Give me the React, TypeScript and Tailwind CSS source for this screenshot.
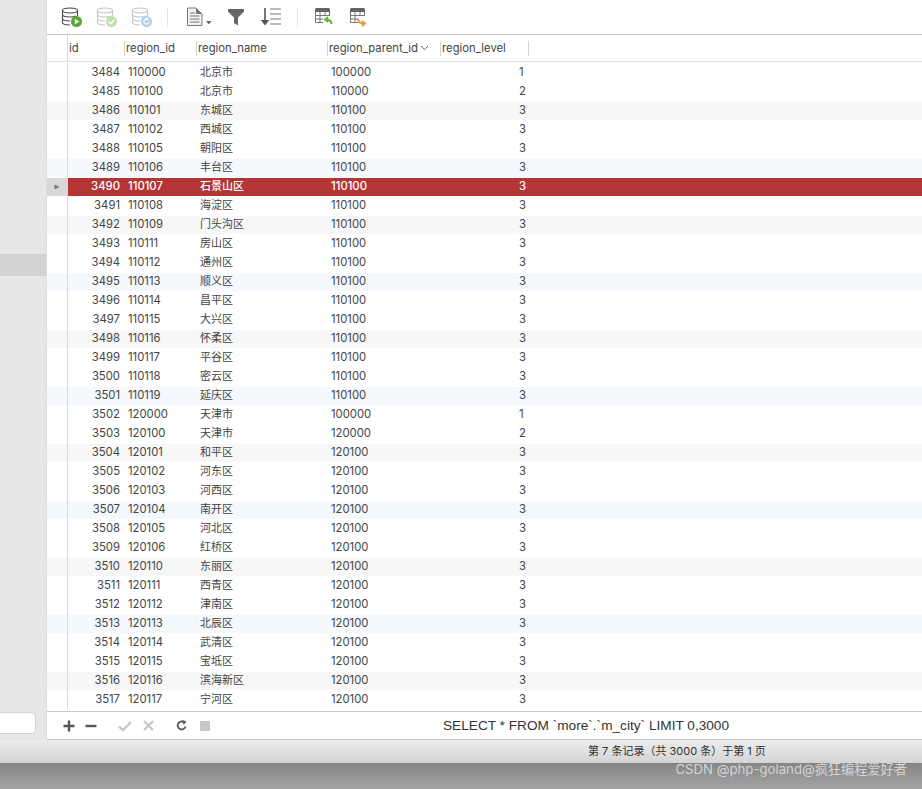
import { ReactNode } from 'react';

const FONT = 'font-["Inter","Noto_Sans_CJK_SC",sans-serif]';

// id, region_id, name, parent, level
const ROWS: [number, string, string, string, number][] = [
  [3484, '110000', '北京市', '100000', 1],
  [3485, '110100', '北京市', '110000', 2],
  [3486, '110101', '东城区', '110100', 3],
  [3487, '110102', '西城区', '110100', 3],
  [3488, '110105', '朝阳区', '110100', 3],
  [3489, '110106', '丰台区', '110100', 3],
  [3490, '110107', '石景山区', '110100', 3],
  [3491, '110108', '海淀区', '110100', 3],
  [3492, '110109', '门头沟区', '110100', 3],
  [3493, '110111', '房山区', '110100', 3],
  [3494, '110112', '通州区', '110100', 3],
  [3495, '110113', '顺义区', '110100', 3],
  [3496, '110114', '昌平区', '110100', 3],
  [3497, '110115', '大兴区', '110100', 3],
  [3498, '110116', '怀柔区', '110100', 3],
  [3499, '110117', '平谷区', '110100', 3],
  [3500, '110118', '密云区', '110100', 3],
  [3501, '110119', '延庆区', '110100', 3],
  [3502, '120000', '天津市', '100000', 1],
  [3503, '120100', '天津市', '120000', 2],
  [3504, '120101', '和平区', '120100', 3],
  [3505, '120102', '河东区', '120100', 3],
  [3506, '120103', '河西区', '120100', 3],
  [3507, '120104', '南开区', '120100', 3],
  [3508, '120105', '河北区', '120100', 3],
  [3509, '120106', '红桥区', '120100', 3],
  [3510, '120110', '东丽区', '120100', 3],
  [3511, '120111', '西青区', '120100', 3],
  [3512, '120112', '津南区', '120100', 3],
  [3513, '120113', '北辰区', '120100', 3],
  [3514, '120114', '武清区', '120100', 3],
  [3515, '120115', '宝坻区', '120100', 3],
  [3516, '120116', '滨海新区', '120100', 3],
  [3517, '120117', '宁河区', '120100', 3],
];

function DbIcon({ badge, faded, children }: { badge: string; faded?: boolean; children: ReactNode }) {
  const line = faded ? '#c4c4c4' : '#4a4a4a';
  return (
    <svg width="22" height="22" viewBox="0 0 22 22" fill="none">
      <ellipse cx="9" cy="4.5" rx="7.5" ry="2.5" stroke={line} strokeWidth="1.1" />
      <path d="M1.5 4.5V16.5C1.5 18 5 19 9 19M16.5 4.5V10M1.5 8.5C1.5 10 5 11 9 11C11.5 11 13.5 10.6 15 10M1.5 12.5C1.5 14 5 15 9 15" stroke={line} strokeWidth="1.1" />
      <circle cx="15.5" cy="15.5" r="5.5" fill={badge} />
      {children}
    </svg>
  );
}

function TableIcon({ arrow, back }: { arrow: string; back?: boolean }) {
  return (
    <svg width="20" height="20" viewBox="0 0 20 20" fill="none">
      <path d="M1 2.5C1 1.7 1.7 1 2.5 1H14.5C15.3 1 16 1.7 16 2.5V5H1Z" fill="#666" />
      <path d="M1.5 5V15.5H9M15.5 5V9M1.5 8.5H15.5M1.5 12H9M6 5V15.5M11 5V9" stroke="#777" strokeWidth="1" />
      {back ? (
        <path d="M17.5 17C17.5 14 15.5 12.5 11.5 12.5M14 10L11 12.5L14 15" stroke={arrow} strokeWidth="2" />
      ) : (
        <path d="M9 12C9 15 11 16.5 15.5 16.5M13 14L16 16.5L13 19" stroke={arrow} strokeWidth="2" />
      )}
    </svg>
  );
}

function TopBar() {
  return (
    <div className="flex h-[35px] items-center border-b border-[#c4c4c4] bg-white pl-[14px] pb-px">
      <DbIcon badge="#5aa532">
        <path d="M13.8 12.8L18.5 15.5L13.8 18.2Z" fill="#fff" />
      </DbIcon>
      <div className="ml-[13px]">
        <DbIcon badge="#bfe0ad" faded>
          <path d="M12.8 15.5L14.8 17.5L18.2 13.8" stroke="#fff" strokeWidth="1.6" />
        </DbIcon>
      </div>
      <div className="ml-[13px]">
        <DbIcon badge="#b4cde6" faded>
          <path d="M18 15.5A2.6 2.6 0 1 1 15.5 12.9M15 11.5L17 13L15 14.5" stroke="#fff" strokeWidth="1.2" />
        </DbIcon>
      </div>
      <div className="ml-[14px] mr-[18px] h-5 w-px bg-[#e4e4e4]" />
      <svg width="26" height="20" viewBox="0 0 26 20" fill="none">
        <path d="M1.5 1H10L16 7V18.5H1.5Z" fill="#f2f2f2" stroke="#777" strokeWidth="1" />
        <path d="M10 1V7H16Z" fill="#777" />
        <path d="M4 6H9M4 9H13.5M4 12H13.5M4 15H13.5" stroke="#777" strokeWidth="1" />
        <path d="M20 14H25.5L22.75 17.5Z" fill="#666" />
      </svg>
      <svg className="ml-[15px]" width="18" height="18" viewBox="0 0 18 18">
        <path d="M1 1H17V3.5L11 9.5V17.5L7 15V9.5L1 3.5Z" fill="#666" />
      </svg>
      <svg className="ml-[15px]" width="22" height="20" viewBox="0 0 22 20" fill="none">
        <path d="M5 1V15" stroke="#555" strokeWidth="1.6" />
        <path d="M0.8 13H9.2L5 18.5Z" fill="#555" />
        <path d="M10 2H21M10 7H21M10 12H21M10 17H21" stroke="#777" strokeWidth="1.1" />
      </svg>
      <div className="ml-[15px] mr-[16px] h-5 w-px bg-[#e4e4e4]" />
      <TableIcon arrow="#68b03c" back />
      <div className="ml-[15px]">
        <TableIcon arrow="#e89a3c" />
      </div>
    </div>
  );
}

function HeaderCell({ label, w, sort }: { label: string; w: string; sort?: boolean }) {
  return (
    <div className={`flex h-[15px] items-center gap-[2px] pl-px border-r border-[#d4d4d4] ${w}`}>
      <span>{label}</span>
      {sort && (
        <svg width="9" height="6" viewBox="0 0 9 6" fill="none">
          <path d="M1 1L4.5 4.5L8 1" stroke="#666" strokeWidth="1" />
        </svg>
      )}
    </div>
  );
}

function Row({ row, index }: { row: (typeof ROWS)[number]; index: number }) {
  const [id, regionId, name, parent, level] = row;
  const selected = id === 3490;
  let bg = 'bg-white';
  if (index % 3 === 2) bg = (index - 2) % 6 === 0 ? 'bg-[#f7f7f7]' : 'bg-[#f5f8fd]';
  if (selected) bg = 'bg-[#b33535] text-white font-medium';
  return (
    <div className="flex h-[19px] items-center">
      <div className={`flex h-[18px] w-[20px] items-center justify-center ${selected ? 'bg-[#d8d8d8]' : index % 3 === 2 ? bg : ''}`}>
        {selected && (
          <svg width="6" height="6" viewBox="0 0 6 6">
            <path d="M0.5 0.5L5.5 3L0.5 5.5Z" fill="#777" />
          </svg>
        )}
      </div>
      <div className="h-[19px] w-px bg-[#d8d8d8]" />
      <div className={`flex h-[18px] flex-1 items-center ${bg}`}>
        <div className="w-[52px] text-right">{id}</div>
        <div className="w-[73px] pl-2">{regionId}</div>
        <div className="w-[131px] pl-[7px] text-[11px]">{name}</div>
        <div className="w-[113px] pl-[7px]">{parent}</div>
        <div className="w-[87px] pl-[82px]">{level}</div>
      </div>
    </div>
  );
}

export default function App() {
  return (
    <div className={`flex h-[789px] w-[922px] flex-col overflow-hidden bg-white ${FONT} text-[11.3px] text-[#444]`}>
      <div className="flex h-[740px]">
        {/* sidebar */}
        <div className="flex w-[47px] flex-col border-r border-[#dcdcdc] bg-[#e7e7e7]">
          <div className="mt-[254px] h-[22px] bg-[#d2d2d2]" />
          <div className="mt-[436px] h-[22px] w-[36px] rounded-r-[5px] border border-l-0 border-[#d0d0d0] bg-white" />
        </div>
        <div className="flex min-w-0 flex-1 flex-col">
          <TopBar />
          {/* column headers */}
          <div className="flex h-[27px] items-center border-b border-[#e2e2e2]">
            <div className="h-full w-[21px] border-r border-[#d8d8d8]" />
            <HeaderCell label="id" w="w-[57px]" />
            <HeaderCell label="region_id" w="w-[72px]" />
            <HeaderCell label="region_name" w="w-[131px]" />
            <HeaderCell label="region_parent_id" w="w-[113px]" sort />
            <HeaderCell label="region_level" w="w-[88px]" />
          </div>
          {/* rows */}
          <div className="flex-1 overflow-hidden pt-px">
            {ROWS.map((row, i) => (
              <Row key={row[0]} row={row} index={i} />
            ))}
          </div>
          {/* footer bar */}
          <div className="flex h-[29px] shrink-0 items-center border-y border-[#c8c8c8] bg-white pl-4">
            <svg width="12" height="12" viewBox="0 0 12 12">
              <path d="M6 0.5V11.5M0.5 6H11.5" stroke="#555" strokeWidth="2.4" />
            </svg>
            <svg className="ml-[10px]" width="12" height="12" viewBox="0 0 12 12">
              <path d="M0.5 6H11.5" stroke="#555" strokeWidth="2.4" />
            </svg>
            <svg className="ml-[21px]" width="14" height="12" viewBox="0 0 14 12" fill="none">
              <path d="M1 6.5L5 10L13 2" stroke="#c8c8c8" strokeWidth="2.4" />
            </svg>
            <svg className="ml-[11px]" width="11" height="11" viewBox="0 0 11 11" fill="none">
              <path d="M1 1L10 10M10 1L1 10" stroke="#c8c8c8" strokeWidth="2.4" />
            </svg>
            <svg className="ml-[22px]" width="11" height="11" viewBox="0 0 11 11" fill="none">
              <path d="M9.5 6.5A4 4 0 1 1 8 2.2" stroke="#555" strokeWidth="1.8" />
              <path d="M6.5 0L10.5 1.5L7.5 5Z" fill="#555" />
            </svg>
            <div className="ml-[13px] h-[10px] w-[10px] bg-[#c8c8c8]" />
            <div className="ml-[233px] pt-px font-['Liberation_Sans'] text-[13.65px] text-[#333]">SELECT * FROM `more`.`m_city` LIMIT 0,3000</div>
          </div>
        </div>
      </div>
      {/* status bar */}
      <div className="flex h-[23px] shrink-0 items-center bg-gradient-to-b from-[#ececec] to-[#d4d4d4] pl-[588px] text-[11px] text-[#333]">
        第 7 条记录（共 3000 条）于第 1 页
      </div>
      {/* desktop behind the window */}
      <div className="relative flex-1 bg-gradient-to-b from-[#858585] to-[#a4a4a4]">
        <div className="absolute right-[15px] top-[-3px] text-[13.2px] text-[#d4d4d4]">CSDN @php-goland@疯狂编程爱好者</div>
      </div>
    </div>
  );
}
